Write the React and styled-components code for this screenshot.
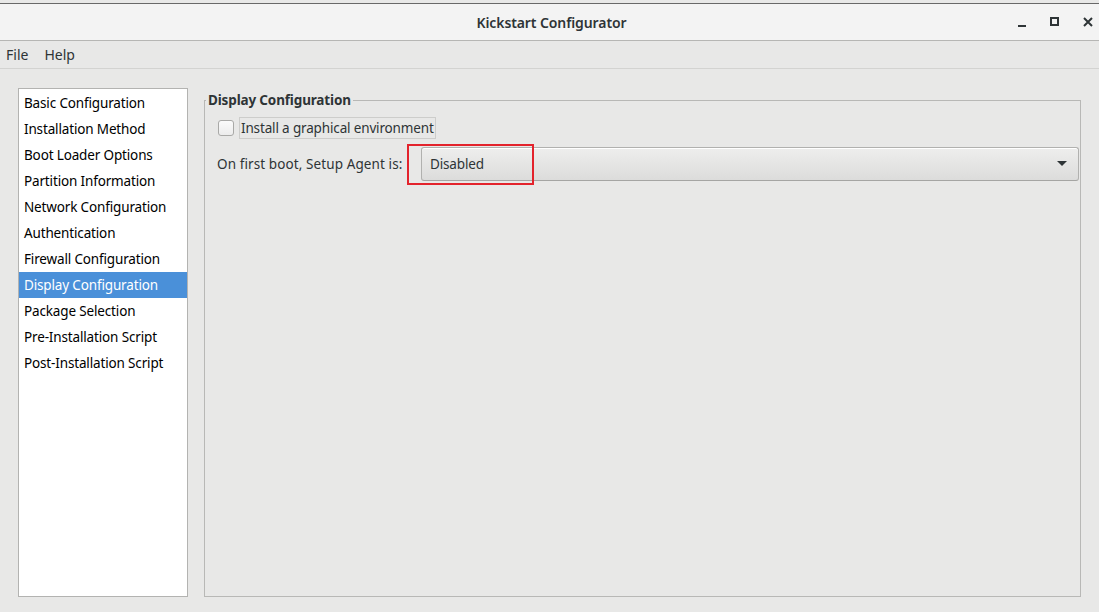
import React from 'react';
import styled, { createGlobalStyle } from 'styled-components';

const GlobalStyle = createGlobalStyle`
  html, body {
    margin: 0;
    padding: 0;
    background: #e8e8e7;
  }
  body {
    font-family: 'Noto Sans', 'Open Sans', sans-serif;
    color: #2e3436;
  }
`;

const Window = styled.div`
  width: 1099px;
  height: 612px;
  display: flex;
  flex-direction: column;
  background: #e8e8e7;
  overflow: hidden;
  padding-top: 3px;
  box-sizing: border-box;
`;

const TitleBar = styled.div`
  height: 36px;
  flex: none;
  display: flex;
  align-items: center;
  justify-content: center;
  position: relative;
  background: #f3f3f3;
  border-top: 1px solid #686868;
  border-bottom: 1px solid #b6b6b4;
`;

const Title = styled.div`
  font-size: 14px;
  font-weight: 600;
  color: #2e3436;
  letter-spacing: -0.1px;
  margin-left: 4px;
`;

const Controls = styled.div`
  position: absolute;
  right: 3px;
  top: 0;
  bottom: 0;
  display: flex;
  align-items: center;
  gap: 17px;
`;

const ControlButton = styled.div`
  width: 16px;
  height: 16px;
  display: flex;
  align-items: center;
  justify-content: center;
`;

const MenuBar = styled.div`
  height: 27px;
  flex: none;
  display: flex;
  align-items: center;
  gap: 16px;
  padding-left: 6px;
  border-bottom: 1px solid #d3d3d1;
`;

const MenuItem = styled.span`
  font-size: 14px;
  color: #2e3436;
`;

const Body = styled.div`
  flex: 1;
  display: flex;
  gap: 16px;
  padding: 19px 18px 15px 18px;
  min-height: 0;
`;

const Sidebar = styled.ul`
  width: 170px;
  flex: none;
  margin: 0;
  padding: 1px 0 0 0;
  list-style: none;
  background: #ffffff;
  border: 1px solid #b3b3b1;
  box-sizing: border-box;
`;

const SidebarItem = styled.li`
  height: 26px;
  line-height: 26px;
  padding-left: 5px;
  font-size: 13.5px;
  letter-spacing: -0.15px;
  white-space: nowrap;
  color: ${(p) => (p.$active ? '#ffffff' : '#000000')};
  background: ${(p) => (p.$active ? '#4a90d9' : 'transparent')};
`;

const Frame = styled.fieldset`
  flex: 1;
  margin: 3px 0 0 0;
  padding: 8px 1px 0 13px;
  border: 1px solid #b8b8b6;
  min-width: 0;
  display: flex;
  flex-direction: column;
`;

const Legend = styled.legend`
  font-size: 13.5px;
  font-weight: 700;
  letter-spacing: -0.15px;
  color: #2e3436;
  padding: 0 2px 0 2px;
  margin-left: -12px;
  line-height: 18px;
`;

const CheckRow = styled.label`
  display: flex;
  align-items: center;
  gap: 5px;
  height: 22px;
`;

const CheckBox = styled.span`
  width: 14px;
  height: 14px;
  border: 1px solid #a9a9a7;
  border-radius: 3px;
  background: linear-gradient(#fbfbfb, #ececec);
`;

const CheckLabel = styled.span`
  font-size: 13.5px;
  letter-spacing: -0.15px;
  padding: 0 1px 0 1px;
  height: 20px;
  line-height: 20px;
  border: 1px solid #cdcdcb;
  white-space: nowrap;
`;

const AgentRow = styled.div`
  display: flex;
  align-items: center;
  margin-top: 8px;
`;

const AgentLabel = styled.span`
  font-size: 13.5px;
  letter-spacing: 0.1px;
  white-space: nowrap;
  margin-left: -1px;
  width: 204px;
`;

const ComboWrap = styled.div`
  flex: 1;
  position: relative;
`;

const Combo = styled.div`
  height: 32px;
  display: flex;
  align-items: center;
  justify-content: space-between;
  padding: 0 11px 0 8px;
  border: 1px solid #b1b1af;
  border-bottom-color: #a5a5a3;
  border-radius: 3px;
  background: linear-gradient(#eeeeed, #dcdcdb);
  box-shadow: inset 0 1px #ffffff;
  font-size: 13.5px;
  letter-spacing: -0.15px;
`;

const Highlight = styled.div`
  position: absolute;
  left: -14px;
  top: -3px;
  width: 127px;
  height: 41px;
  border: 2px solid #e3232c;
  box-sizing: border-box;
  pointer-events: none;
`;

const items = [
  'Basic Configuration',
  'Installation Method',
  'Boot Loader Options',
  'Partition Information',
  'Network Configuration',
  'Authentication',
  'Firewall Configuration',
  'Display Configuration',
  'Package Selection',
  'Pre-Installation Script',
  'Post-Installation Script',
];

export default function App() {
  return (
    <>
      <GlobalStyle />
      <Window>
        <TitleBar>
          <Title>Kickstart Configurator</Title>
          <Controls>
            <ControlButton>
              <svg width="16" height="16" viewBox="0 0 16 16">
                <rect x="4" y="11" width="8" height="2" fill="#2e3436" />
              </svg>
            </ControlButton>
            <ControlButton>
              <svg width="16" height="16" viewBox="0 0 16 16">
                <rect x="4" y="4" width="7" height="7" fill="none" stroke="#2e3436" strokeWidth="2" />
              </svg>
            </ControlButton>
            <ControlButton>
              <svg width="16" height="16" viewBox="0 0 16 16">
                <path d="M4 4 L12 12 M12 4 L4 12" stroke="#2e3436" strokeWidth="2" />
              </svg>
            </ControlButton>
          </Controls>
        </TitleBar>
        <MenuBar>
          <MenuItem>File</MenuItem>
          <MenuItem>Help</MenuItem>
        </MenuBar>
        <Body>
          <Sidebar>
            {items.map((it) => (
              <SidebarItem key={it} $active={it === 'Display Configuration'}>
                {it}
              </SidebarItem>
            ))}
          </Sidebar>
          <Frame>
            <Legend>Display Configuration</Legend>
            <CheckRow>
              <CheckBox />
              <CheckLabel>Install a graphical environment</CheckLabel>
            </CheckRow>
            <AgentRow>
              <AgentLabel>On first boot, Setup Agent is:</AgentLabel>
              <ComboWrap>
                <Combo>
                  <span>Disabled</span>
                  <svg width="10" height="6" viewBox="0 0 10 6">
                    <path d="M0 0 L10 0 L5 5 Z" fill="#2e3436" />
                  </svg>
                </Combo>
                <Highlight />
              </ComboWrap>
            </AgentRow>
          </Frame>
        </Body>
      </Window>
    </>
  );
}
